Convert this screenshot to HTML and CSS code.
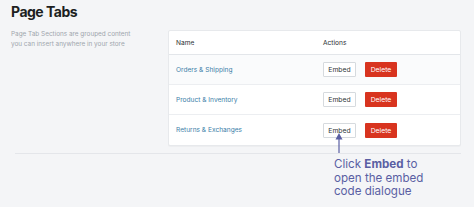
FILE: index.html
```html
<!DOCTYPE html>
<html>
<head>
<meta charset="utf-8">
<link rel="stylesheet" href="styles.css">
</head>
<body>
<div class="page">
  <div class="section">
    <div class="intro">
      <h1 class="title">Page Tabs</h1>
      <p class="desc">Page Tab Sections are grouped content you can insert anywhere in your store</p>
    </div>
    <div class="card">
      <div class="row head">
        <div class="col-name">Name</div>
        <div class="col-actions">Actions</div>
      </div>
      <div class="row hover">
        <div class="col-name"><a class="link">Orders &amp; Shipping</a></div>
        <div class="col-actions"><span class="btn embed">Embed</span><span class="btn delete">Delete</span></div>
      </div>
      <div class="row">
        <div class="col-name"><a class="link">Product &amp; Inventory</a></div>
        <div class="col-actions"><span class="btn embed">Embed</span><span class="btn delete">Delete</span></div>
      </div>
      <div class="row last">
        <div class="col-name"><a class="link">Returns &amp; Exchanges</a></div>
        <div class="col-actions"><span class="btn embed">Embed</span><span class="btn delete">Delete</span></div>
      </div>
    </div>
  </div>
  <div class="divider"></div>
  <div class="callout">
    <svg class="arrow" width="10" height="20" viewBox="0 0 10 20">
      <path d="M5 0 L8.5 6.5 L1.5 6.5 Z" fill="#5a5fa3"/>
      <line x1="5" y1="5" x2="5" y2="20" stroke="#5a5fa3" stroke-width="1.2"/>
    </svg>
    <p class="note">Click <b>Embed</b> to<br>open the embed<br>code dialogue</p>
  </div>
</div>
</body>
</html>
```
FILE: styles.css
```css
html, body {
  margin: 0;
  padding: 0;
  background: #f4f5f7;
}
body {
  font-family: Inter, "Noto Sans", "Liberation Sans", sans-serif;
  width: 474px;
  height: 207px;
  overflow: hidden;
  position: relative;
}
.page {
  padding: 0 13px 0 11px;
  position: relative;
}
.section {
  display: flex;
}
.intro {
  width: 157px;
  flex: none;
}
.title {
  margin: 0;
  padding-top: 3px;
  font-size: 14px;
  font-weight: 700;
  color: #1d1f22;
  line-height: 17px;
  letter-spacing: -0.5px;
}
.desc {
  margin: 9px 0 0 0;
  font-size: 6.4px;
  line-height: 10px;
  color: #a0a5ad;
  width: 130px;
}
.card {
  flex: 1;
  margin-top: 30px;
  background: #fff;
  border: 1px solid #e7e9ec;
  border-radius: 2px;
  box-shadow: 0 1px 1px rgba(0,0,0,0.03);
}
.row {
  display: flex;
  align-items: center;
  height: 29px;
  border-bottom: 1px solid #eceef1;
  padding-left: 7px;
  font-size: 6.6px;
}
.row.head {
  height: 23px;
  color: #2b2e33;
  border-bottom: 1px solid #e3e6ea;
}
.row.last {
  border-bottom: none;
  height: 30px;
}
.row.hover {
  background: #fafbfc;
}
.col-name {
  width: 147px;
}
.col-actions {
  display: flex;
  gap: 9px;
  align-items: center;
}
.link {
  color: #3b7ea8;
  text-decoration: none;
}
.btn {
  display: inline-flex;
  align-items: center;
  justify-content: center;
  height: 15px;
  box-sizing: border-box;
  font-size: 6.8px;
  border-radius: 1px;
}
.embed {
  width: 33px;
  background: #fff;
  border: 1px solid #d6dade;
  color: #2f3338;
}
.delete {
  width: 32px;
  background: #d8341f;
  color: #fff;
}
.divider {
  margin: 7px 0 0 4px;
  height: 1px;
  background: #e4e6ea;
}
.callout {
  position: absolute;
  left: 334px;
  top: 133px;
  width: 120px;
}
.arrow {
  display: block;
}
.note {
  margin: 5px 0 0 0;
  font-size: 11.6px;
  line-height: 13.5px;
  color: #5a5fa3;
  font-family: Inter, "Open Sans", sans-serif;
}
.note b {
  font-weight: 700;
}
```
